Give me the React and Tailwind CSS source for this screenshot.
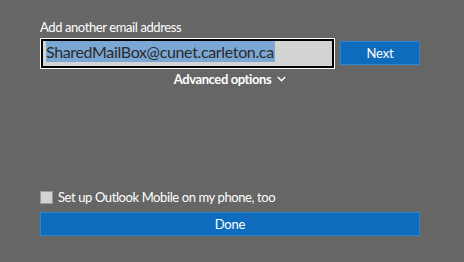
export default function App() {
  return (
    <div className="w-[464px] h-[262px] bg-[#666666] text-white flex flex-col px-[40px] pt-[19px] font-['Lato',sans-serif]">
      <div className="text-[13px] leading-[16px] h-[19px] tracking-[-0.4px]">Add another email address</div>
      <div className="flex items-start gap-[5px]">
        <div className="w-[295px] h-[31px] border border-white">
          <div className="w-full h-full border-2 border-black bg-[#d3d3d3] flex items-start pl-[3px]">
            <span className="bg-[#7ba7d4] text-[#2a2a2a] text-[16px] leading-[21px] tracking-[-0.35px] pr-[1px]">SharedMailBox@cunet.carleton.ca</span>
          </div>
        </div>
        <button className="mt-[3px] w-[80px] h-[24px] bg-[#0f6cbd] border border-[#2b88d8] text-white text-[13px] leading-[16px] tracking-[-0.2px]">Next</button>
      </div>
      <div className="flex justify-center items-center gap-[6px] mt-[1px] h-[18px] pr-[4px]">
        <span className="text-[13px] font-bold leading-[16px] tracking-[-0.4px]">Advanced options</span>
        <svg width="9" height="6" viewBox="0 0 9 6" fill="none" stroke="white" strokeWidth="1.5"><path d="M0.8 1l3.7 3.7 3.7-3.7" /></svg>
      </div>
      <div className="flex-1" />
      <label className="flex items-center gap-[5px] h-[16px]">
        <span className="w-[13px] h-[13px] bg-[#d3d3d3] border border-[#9a9a9a]" />
        <span className="text-[13px] leading-[16px] tracking-[-0.4px]">Set up Outlook Mobile on my phone, too</span>
      </label>
      <button className="mt-[7px] mb-[26px] w-[380px] h-[24px] bg-[#0f6cbd] border border-[#2b88d8] text-white text-[13px] leading-[16px] tracking-[-0.2px]">Done</button>
    </div>
  );
}
